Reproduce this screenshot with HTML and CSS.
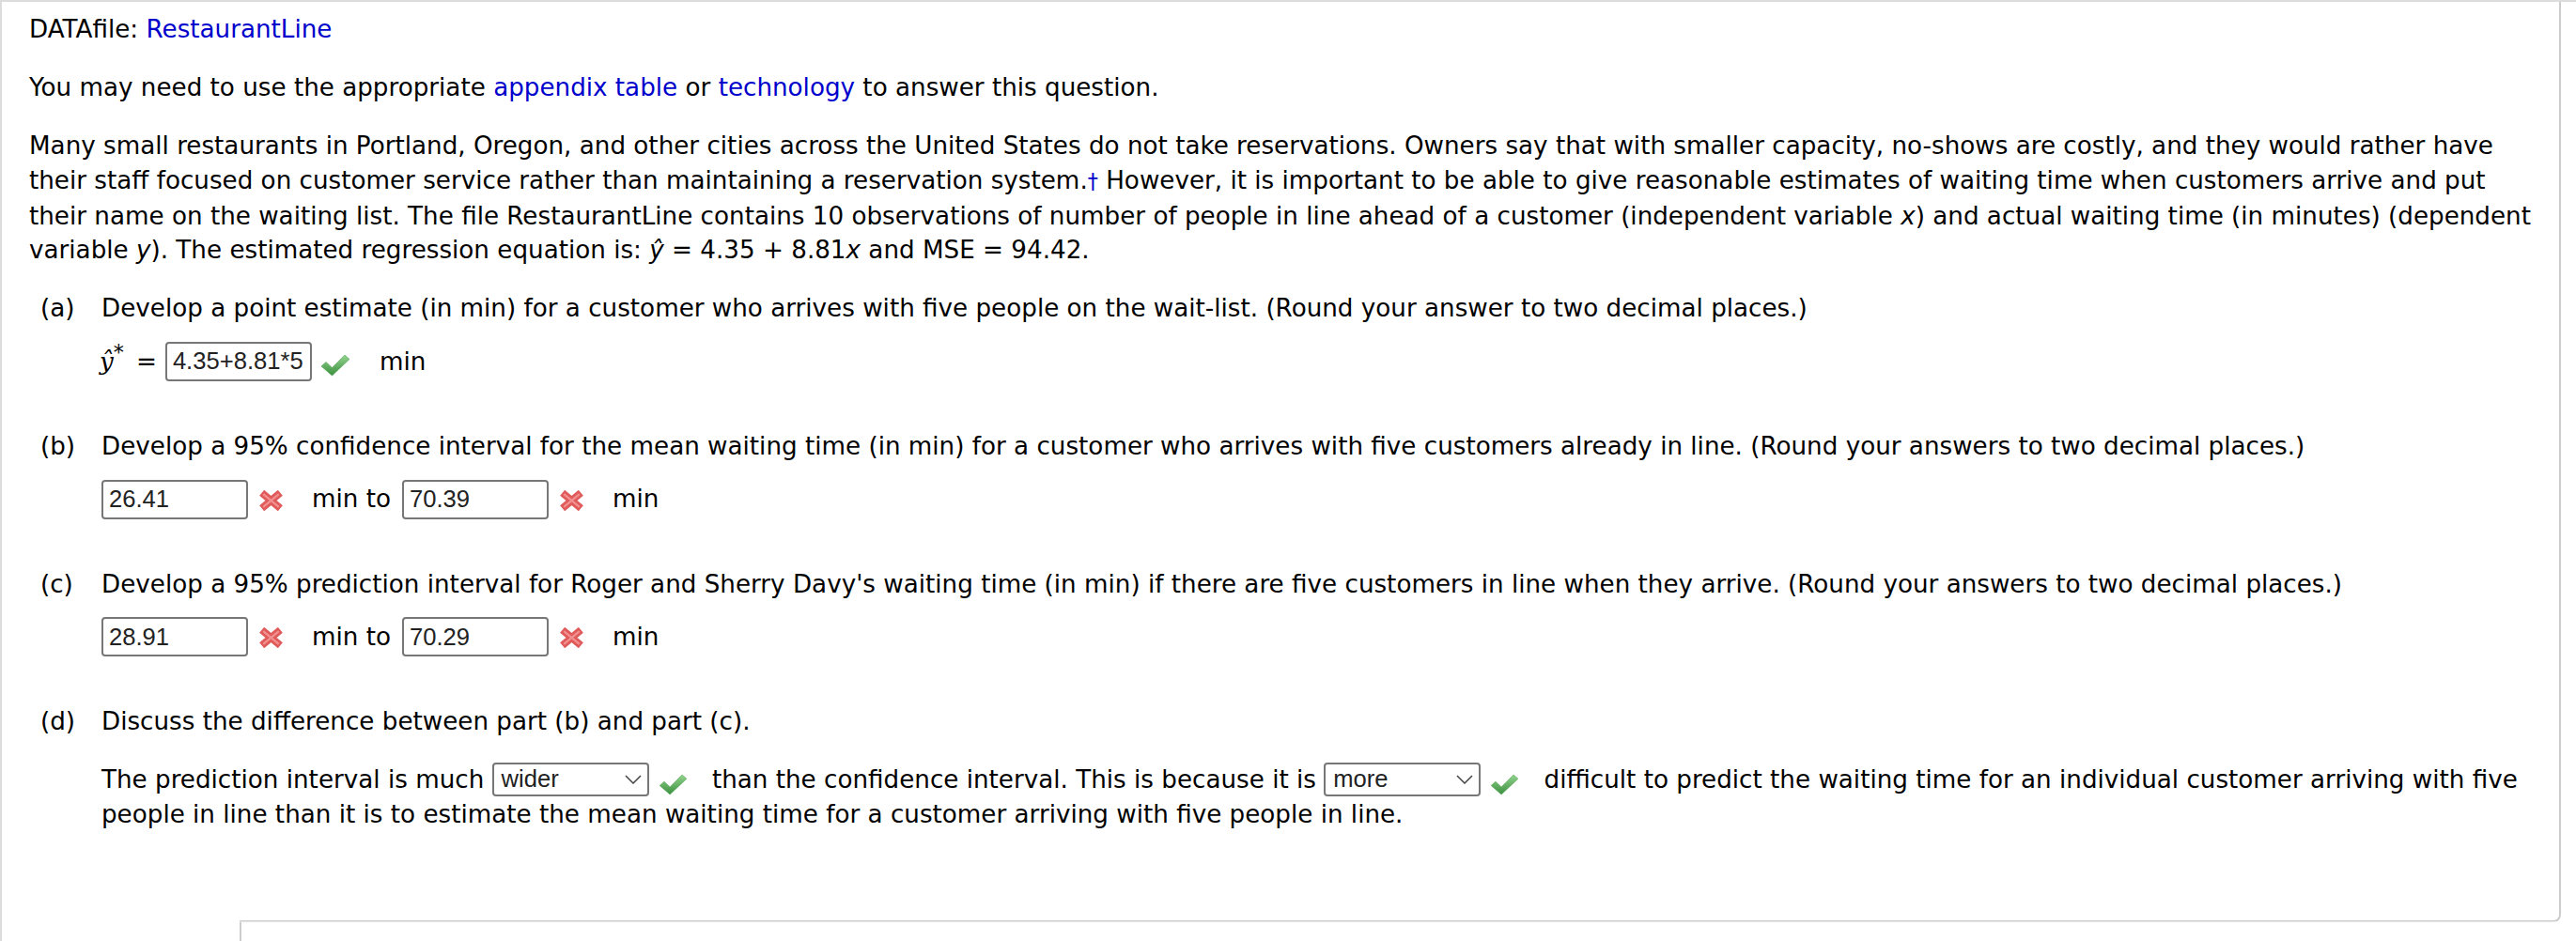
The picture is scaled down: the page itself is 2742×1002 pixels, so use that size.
FILE: index.html
```html
<!DOCTYPE html>
<html lang="en">
<head>
<meta charset="utf-8">
<title>RestaurantLine</title>
<link rel="stylesheet" href="styles.css">
</head>
<body>
<div class="page">
  <div class="question">
    <p class="para">DATAfile: <a class="link" href="#">RestaurantLine</a></p>
    <p class="para">You may need to use the appropriate <a class="link" href="#">appendix table</a> or <a class="link" href="#">technology</a> to answer this question.</p>
    <p class="para">Many small restaurants in Portland, Oregon, and other cities across the United States do not take reservations. Owners say that with smaller capacity, no-shows are costly, and they would rather have their staff focused on customer service rather than maintaining a reservation system.<a class="link dagger" href="#">†</a> However, it is important to be able to give reasonable estimates of waiting time when customers arrive and put their name on the waiting list. The file RestaurantLine contains 10 observations of number of people in line ahead of a customer (independent variable <i>x</i>) and actual waiting time (in minutes) (dependent variable <i>y</i>). The estimated regression equation is: <i>ŷ</i> = 4.35 + 8.81<i>x</i> and MSE = 94.42.</p>

    <div class="part">
      <span class="label">(a)</span>
      <div class="body">
        <p class="q">Develop a point estimate (in min) for a customer who arrives with five people on the wait-list. (Round your answer to two decimal places.)</p>
        <div class="answer">
          <span class="math"><i>ŷ</i><sup>*</sup></span>
          <span class="eq">=</span>
          <input class="ans" type="text" value="4.35+8.81*5" readonly>
          <svg class="icon ok" width="32" height="24" viewBox="0 0 32 24"><defs><linearGradient id="ga" x1="0" y1="0" x2="0" y2="1"><stop offset="0" stop-color="#94d48f"/><stop offset="1" stop-color="#3a8f3e"/></linearGradient></defs><path d="M1 13 L6 8.5 L12.5 14.5 L26 1 L31 5.5 L12.5 23 Z" fill="url(#ga)" stroke="#57a657" stroke-width="0.6"/></svg>
          <span class="unit">min</span>
        </div>
      </div>
    </div>

    <div class="part">
      <span class="label">(b)</span>
      <div class="body">
        <p class="q">Develop a 95% confidence interval for the mean waiting time (in min) for a customer who arrives with five customers already in line. (Round your answers to two decimal places.)</p>
        <div class="answer">
          <input class="ans" type="text" value="26.41" readonly>
          <svg class="icon bad" width="29" height="22" viewBox="0 0 28 21"><path d="M4.5 2.5 L23.5 18.5 M23.5 2.5 L4.5 18.5" stroke="#e05a5a" stroke-width="7.5" fill="none"/><path d="M6 3.8 L22 17.2 M22 3.8 L6 17.2" stroke="#f29090" stroke-width="2.2" fill="none"/></svg>
          <span class="unit">min to</span>
          <input class="ans" type="text" value="70.39" readonly>
          <svg class="icon bad" width="29" height="22" viewBox="0 0 28 21"><path d="M4.5 2.5 L23.5 18.5 M23.5 2.5 L4.5 18.5" stroke="#e05a5a" stroke-width="7.5" fill="none"/><path d="M6 3.8 L22 17.2 M22 3.8 L6 17.2" stroke="#f29090" stroke-width="2.2" fill="none"/></svg>
          <span class="unit">min</span>
        </div>
      </div>
    </div>

    <div class="part">
      <span class="label">(c)</span>
      <div class="body">
        <p class="q">Develop a 95% prediction interval for Roger and Sherry Davy's waiting time (in min) if there are five customers in line when they arrive. (Round your answers to two decimal places.)</p>
        <div class="answer">
          <input class="ans" type="text" value="28.91" readonly>
          <svg class="icon bad" width="29" height="22" viewBox="0 0 28 21"><path d="M4.5 2.5 L23.5 18.5 M23.5 2.5 L4.5 18.5" stroke="#e05a5a" stroke-width="7.5" fill="none"/><path d="M6 3.8 L22 17.2 M22 3.8 L6 17.2" stroke="#f29090" stroke-width="2.2" fill="none"/></svg>
          <span class="unit">min to</span>
          <input class="ans" type="text" value="70.29" readonly>
          <svg class="icon bad" width="29" height="22" viewBox="0 0 28 21"><path d="M4.5 2.5 L23.5 18.5 M23.5 2.5 L4.5 18.5" stroke="#e05a5a" stroke-width="7.5" fill="none"/><path d="M6 3.8 L22 17.2 M22 3.8 L6 17.2" stroke="#f29090" stroke-width="2.2" fill="none"/></svg>
          <span class="unit">min</span>
        </div>
      </div>
    </div>

    <div class="part last">
      <span class="label">(d)</span>
      <div class="body">
        <p class="q qd">Discuss the difference between part (b) and part (c).</p>
        <p class="discuss">The prediction interval is much <span class="select"><span class="sel-text">wider</span><svg class="chev" width="18" height="10" viewBox="0 0 18 10"><polyline points="1,1 9,9 17,1" fill="none" stroke="#444" stroke-width="1.5"/></svg></span><svg class="icon ok inline" width="31" height="23" viewBox="0 0 32 24"><defs><linearGradient id="gb" x1="0" y1="0" x2="0" y2="1"><stop offset="0" stop-color="#94d48f"/><stop offset="1" stop-color="#3a8f3e"/></linearGradient></defs><path d="M1 13 L6 8.5 L12.5 14.5 L26 1 L31 5.5 L12.5 23 Z" fill="url(#gb)" stroke="#57a657" stroke-width="0.6"/></svg> than the confidence interval. This is because it is <span class="select"><span class="sel-text">more</span><svg class="chev" width="18" height="10" viewBox="0 0 18 10"><polyline points="1,1 9,9 17,1" fill="none" stroke="#444" stroke-width="1.5"/></svg></span><svg class="icon ok inline" width="31" height="23" viewBox="0 0 32 24"><defs><linearGradient id="gc" x1="0" y1="0" x2="0" y2="1"><stop offset="0" stop-color="#94d48f"/><stop offset="1" stop-color="#3a8f3e"/></linearGradient></defs><path d="M1 13 L6 8.5 L12.5 14.5 L26 1 L31 5.5 L12.5 23 Z" fill="url(#gc)" stroke="#57a657" stroke-width="0.6"/></svg> difficult to predict the waiting time for an individual customer arriving with five people in line than it is to estimate the mean waiting time for a customer arriving with five people in line.</p>
      </div>
    </div>
  </div>
  <div class="footer"></div>
</div>
</body>
</html>
```

FILE: styles.css
```css
* { box-sizing: border-box; }

html, body {
  margin: 0;
  padding: 0;
  background: #fff;
}

body {
  font-family: "DejaVu Sans", Verdana, sans-serif;
  font-size: 26.2px;
  line-height: 36.6px;
  color: #000;
}

.page {
  height: 100vh;
  overflow: hidden;
  display: flex;
  flex-direction: column;
  border-top: 2px solid #dcdcdc;
  border-left: 2px solid #dcdcdc;
}

.question {
  margin-right: 16px;
  padding: 11px 30px 94px 29px;
  border-right: 2px solid #cccccc;
  border-bottom: 2px solid #cccccc;
  border-bottom-right-radius: 8px;
  clip-path: polygon(0 0, 100% 0, 100% 100%, 253px 100%, 253px calc(100% - 2px), 0 calc(100% - 2px));
}

.footer {
  flex: 1;
  margin-left: 253px;
  border-left: 2px solid #cccccc;
}

.para {
  margin: 0 0 25.6px 0;
}

.link {
  color: #0000cc;
  text-decoration: none;
}

.dagger {
  font-size: 0.85em;
}

.part {
  display: flex;
  margin-left: 12px;
  margin-bottom: 51px;
}

.part.last {
  margin-bottom: 0;
}

.label {
  flex: 0 0 65px;
}

.body {
  flex: 1;
  min-width: 0;
}

.q {
  margin: 0 0 17px 0;
}

.qd {
  margin-bottom: 25.6px;
}

.answer {
  display: flex;
  align-items: center;
  height: 42px;
}

.math {
  margin-left: -2px;
  font-family: "DejaVu Serif", "Liberation Serif", serif;
}

.math sup {
  font-family: "DejaVu Sans", sans-serif;
  font-size: 0.85em;
  line-height: 0;
  vertical-align: 0.5em;
}

.eq {
  margin-left: 13px;
  margin-right: 9px;
}

.ans {
  width: 156px;
  height: 42px;
  padding: 0 6px;
  border: 2px solid #777;
  border-radius: 4px;
  font-family: "Liberation Sans", Arial, sans-serif;
  font-size: 25.6px;
  color: #222;
  background: #fff;
  outline: none;
}

.icon {
  flex: none;
}

.answer .ok {
  margin: 8px 0 0 9px;
}

.answer .bad {
  margin: 2px 0 0 10px;
}

.answer .ok + .unit {
  margin-left: 31px;
}

.unit {
  margin-left: 29px;
}

.bad + .unit + .ans {
  margin-left: 12px;
}

.discuss {
  margin: 0;
}

.select {
  display: inline-flex;
  align-items: center;
  justify-content: space-between;
  width: 167px;
  height: 36px;
  padding: 0 6px 0 8px;
  border: 2px solid #777;
  border-radius: 4px;
  vertical-align: middle;
  font-family: "Liberation Sans", Arial, sans-serif;
  font-size: 25.6px;
  line-height: 1;
  color: #222;
  background: #fff;
  margin-top: -4px;
}

.chev {
  flex: none;
}

.ok.inline {
  vertical-align: middle;
  margin: 0 18px -8px 10px;
}
```
